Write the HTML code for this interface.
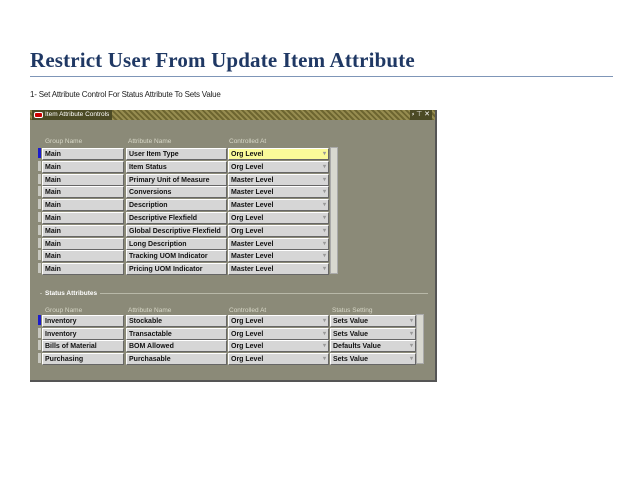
<!DOCTYPE html>
<html><head><style>
body{margin:0;width:640px;height:495px;background:#fff;position:relative;overflow:hidden;font-family:"Liberation Sans",sans-serif}
.a{position:absolute}
.title{left:30px;top:48px;font:bold 21px "Liberation Serif",serif;color:#1f3864;white-space:nowrap;letter-spacing:0.15px}
.hr{left:30px;top:76px;width:583px;height:1px;background:#7f96b8}
.sub{left:30px;top:90px;font-size:8px;color:#222;letter-spacing:-0.2px}
.win{left:30px;top:110px;width:405px;height:270px;background:#8b8a78;border-right:2px solid #555;border-bottom:2px solid #555}
.tb{left:0;top:0;width:405px;height:10px;background:repeating-linear-gradient(45deg,#6d6530 0 2px,#968c50 2px 4px)}
.tbt{left:2px;top:0;height:10px;background:#4b4a25;color:#fff;font-size:6.5px;line-height:10px;padding:0 3px 0 13px}
.ico{left:2px;top:2px;width:7px;height:4px;border:1px solid #fff;background:#c00;border-radius:2px}
.hd{color:#d8d8c8;font-size:6.5px}
.c{background:#d6d6d6;border:1px solid #fff;border-right-color:#666;border-bottom-color:#666;font-size:7px;font-weight:bold;color:#111;line-height:11px;height:10px;padding-left:2px;box-sizing:content-box;white-space:nowrap;overflow:hidden}
.y{background:#fafa99}
.dd:after{content:"▾";position:absolute;right:2px;top:0;color:#999;font-size:6px}
.m{width:3px;height:10px;background:#c8c8c0}
.mb{background:#1a1acc}
.sb{background:#d8d8d0;border:1px solid #aaa;width:6px}
</style></head><body>
<div class="a title">Restrict User From Update Item Attribute</div>
<div class="a hr"></div>
<div class="a sub">1- Set Attribute Control For Status Attribute To Sets Value</div>
<div class="a win">
<div class="a tb"></div>
<div class="a tbt">Item Attribute Controls<div class="a ico"></div></div>
<div class="a" style="right:3px;top:0;color:#fff;font-size:7px;line-height:10px;background:#4b4a25;padding:0 2px">⸗ ⊤ ✕</div>
<div class="a hd" style="left:15px;top:28px">Group Name</div>
<div class="a hd" style="left:98px;top:28px">Attribute Name</div>
<div class="a hd" style="left:199px;top:28px">Controlled At</div>
<div id="r1"></div>
<div class="a" style="left:10px;top:183px;width:388px;height:1px;background:#b8b8a8"></div>
<div class="a" style="left:12px;top:180px;padding:0 3px;background:#8b8a78;color:#fff;font-size:6.5px;font-weight:bold">Status Attributes</div>
<div class="a hd" style="left:15px;top:197px">Group Name</div>
<div class="a hd" style="left:98px;top:197px">Attribute Name</div>
<div class="a hd" style="left:199px;top:197px">Controlled At</div>
<div class="a hd" style="left:302px;top:197px">Status Setting</div>
<div class="a sb" style="left:300px;top:37px;height:125px"></div>
<div class="a sb" style="left:386px;top:204px;height:48px"></div>
<script>
var r=[["Main","User Item Type","Org Level"],["Main","Item Status","Org Level"],["Main","Primary Unit of Measure","Master Level"],["Main","Conversions","Master Level"],["Main","Description","Master Level"],["Main","Descriptive Flexfield","Org Level"],["Main","Global Descriptive Flexfield","Org Level"],["Main","Long Description","Master Level"],["Main","Tracking UOM Indicator","Master Level"],["Main","Pricing UOM Indicator","Master Level"]];
var s=[["Inventory","Stockable","Org Level","Sets Value"],["Inventory","Transactable","Org Level","Sets Value"],["Bills of Material","BOM Allowed","Org Level","Defaults Value"],["Purchasing","Purchasable","Org Level","Sets Value"]];
var h="";
function row(t,d,i){h+='<div class="a m'+(i==0?' mb':'')+'" style="left:8px;top:'+t+'px"></div>';
h+='<div class="a c" style="left:12px;top:'+t+'px;width:78px">'+d[0]+'</div>';
h+='<div class="a c" style="left:96px;top:'+t+'px;width:97px">'+d[1]+'</div>';
h+='<div class="a c dd'+(t<40?' y':'')+'" style="left:198px;top:'+t+'px;width:97px">'+d[2]+'</div>';
if(d[3])h+='<div class="a c dd" style="left:300px;top:'+t+'px;width:82px">'+d[3]+'</div>';}
r.forEach(function(d,i){row(38+i*12.8,d,i)});
s.forEach(function(d,i){row(205+i*12.6,d,i)});
document.getElementById("r1").outerHTML=h;
</script>
</div>
</body></html>
